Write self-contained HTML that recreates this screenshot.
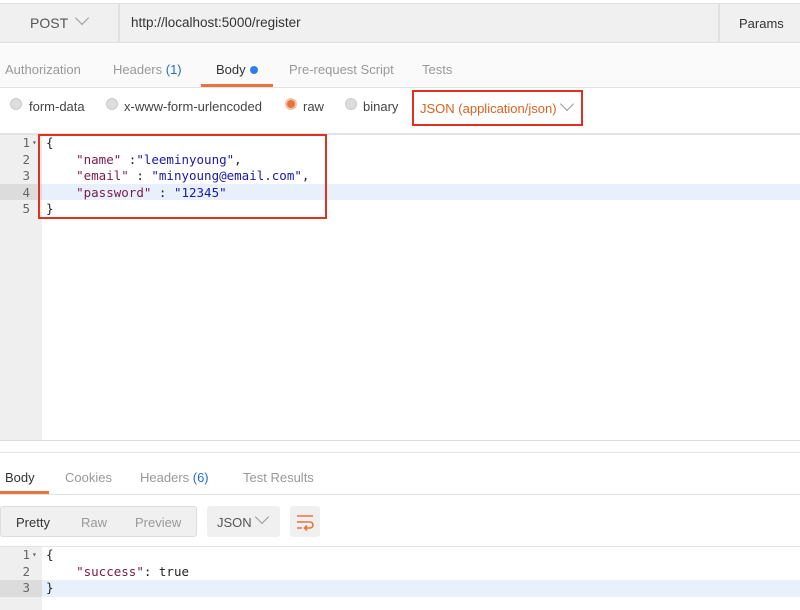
<!DOCTYPE html>
<html><head><style>
*{margin:0;padding:0;box-sizing:border-box}
body{width:800px;height:610px;overflow:hidden;background:#fff;font-family:"Liberation Sans",sans-serif;position:relative;color:#505050}
.a{position:absolute}
.mono{font-family:"DejaVu Sans Mono","Liberation Mono",monospace;font-size:12.5px}
.radio{position:absolute;width:12px;height:12px;border-radius:50%;background:#ddd;border:1px solid #ccc}
.chev{position:absolute;width:10px;height:10px;border-right:1.6px solid #999;border-bottom:1.6px solid #999;transform:rotate(45deg)}
.ln{position:absolute;left:0;width:34px;text-align:right;color:#666}
.k{color:#7a1a4a}.s{color:#1a1aa6}
</style></head><body>
<div class="a" style="left:0;top:3px;width:800px;height:40px;background:#f0f0f0;border-top:1px solid #ddd;border-bottom:1px solid #ddd"></div>
<div class="a" style="left:118px;top:3px;width:2px;height:40px;background:#e0e0e0"></div>
<div class="a" style="left:718px;top:3px;width:2px;height:40px;background:#e0e0e0"></div>
<div class="a" style="left:30px;top:15px;font-size:14px;color:#555">POST</div>
<div class="chev" style="left:77px;top:13px"></div>
<div class="a" style="left:131px;top:15px;font-size:13.5px;color:#333">http://localhost:5000/register</div>
<div class="a" style="left:739px;top:16px;font-size:13px;color:#333">Params</div>

<div class="a" style="left:0;top:44px;width:800px;height:44px;background:#fafafa;border-bottom:1px solid #e3e3e3"></div>
<div class="a" style="left:5px;top:62px;font-size:13px;color:#999">Authorization</div>
<div class="a" style="left:113px;top:62px;font-size:13px;color:#999">Headers <span style="color:#1d6fd1">(1)</span></div>
<div class="a" style="left:216px;top:62px;font-size:13px;color:#333">Body</div>
<div class="a" style="left:250px;top:66px;width:8px;height:8px;border-radius:50%;background:#2f80e6"></div>
<div class="a" style="left:201px;top:84px;width:72px;height:3px;background:#e8743b"></div>
<div class="a" style="left:289px;top:62px;font-size:13px;color:#999">Pre-request Script</div>
<div class="a" style="left:422px;top:62px;font-size:13px;color:#999">Tests</div>

<div class="radio" style="left:10px;top:98px"></div>
<div class="a" style="left:29px;top:99px;font-size:13px;color:#444">form-data</div>
<div class="radio" style="left:106px;top:98px"></div>
<div class="a" style="left:124px;top:99px;font-size:13px;color:#444">x-www-form-urlencoded</div>
<div class="radio" style="left:285px;top:98px;background:#e8743b;border:2px solid #f3c2a8"></div>
<div class="a" style="left:303px;top:99px;font-size:13px;color:#444">raw</div>
<div class="radio" style="left:345px;top:98px"></div>
<div class="a" style="left:363px;top:99px;font-size:13px;color:#444">binary</div>
<div class="a" style="left:412px;top:90px;width:171px;height:36px;border:2px solid #e03020"></div>
<div class="a" style="left:420px;top:101px;font-size:13px;color:#d8631f">JSON (application/json)</div>
<div class="chev" style="left:562px;top:99px"></div>

<div class="a" style="left:0;top:133px;width:800px;height:2px;background:#e3e3e3"></div>
<div class="a" style="left:0;top:135px;width:42px;height:305px;background:#efefef"></div>
<div class="a" style="left:0;top:184px;width:800px;height:16px;background:#e8f0fb"></div>
<div class="a" style="left:0;top:184px;width:42px;height:16px;background:#dcdcdc"></div>
<div class="a" style="left:0;top:440px;width:800px;height:1px;background:#ddd"></div>
<div class="a mono" style="left:0;top:135px;width:800px;line-height:16.5px">
<div class="ln" style="top:0;width:30px">1</div><div class="ln" style="top:16.5px;width:30px">2</div><div class="ln" style="top:33px;width:30px">3</div><div class="ln" style="top:49.5px;width:30px">4</div><div class="ln" style="top:66px;width:30px">5</div>
<div class="a" style="left:32px;top:0;font-size:8px;color:#666">▾</div>
<div class="a" style="left:46px;top:0;white-space:pre;color:#222">{
    <span class="k">"name"</span> :<span class="s">"leeminyoung"</span>,
    <span class="k">"email"</span> : <span class="s">"minyoung@email.com"</span>,
    <span class="k">"password"</span> : <span class="s">"12345"</span>
}</div>
</div>
<div class="a" style="left:38px;top:134px;width:289px;height:85px;border:2px solid #e03020"></div>

<div class="a" style="left:0;top:452px;width:800px;height:1px;background:#e3e3e3"></div>
<div class="a" style="left:0;top:494px;width:800px;height:1px;background:#e3e3e3"></div>
<div class="a" style="left:5px;top:470px;font-size:13px;color:#333">Body</div>
<div class="a" style="left:0;top:491px;width:49px;height:3px;background:#e8743b"></div>
<div class="a" style="left:65px;top:470px;font-size:13px;color:#999">Cookies</div>
<div class="a" style="left:140px;top:470px;font-size:13px;color:#999">Headers <span style="color:#1d6fd1">(6)</span></div>
<div class="a" style="left:243px;top:470px;font-size:13px;color:#999">Test Results</div>

<div class="a" style="left:0;top:506px;width:197px;height:31px;background:#f0f0f0;border:1px solid #ddd;border-radius:3px"></div>
<div class="a" style="left:16px;top:515px;font-size:13px;color:#333">Pretty</div>
<div class="a" style="left:81px;top:515px;font-size:13px;color:#999">Raw</div>
<div class="a" style="left:135px;top:515px;font-size:13px;color:#999">Preview</div>
<div class="a" style="left:207px;top:506px;width:73px;height:31px;background:#f0f0f0;border-radius:3px"></div>
<div class="a" style="left:217px;top:515px;font-size:13px;color:#555">JSON</div>
<div class="chev" style="left:257px;top:512px"></div>
<div class="a" style="left:290px;top:506px;width:30px;height:31px;background:#f0f0f0;border-radius:3px"></div>
<svg class="a" style="left:295px;top:512px" width="20" height="20" viewBox="0 0 20 20" fill="none" stroke="#e8743b" stroke-width="1.6"><path d="M2 4h16M2 10h13a3 3 0 0 1 0 6h-5M12 13.5l-2.5 2.5 2.5 2.5M2 16h5"/></svg>

<div class="a" style="left:0;top:546px;width:800px;height:1px;background:#e3e3e3"></div>
<div class="a" style="left:0;top:547px;width:42px;height:63px;background:#efefef"></div>
<div class="a" style="left:0;top:580px;width:800px;height:17px;background:#e8f0fb"></div>
<div class="a" style="left:0;top:580px;width:42px;height:17px;background:#dcdcdc"></div>
<div class="a mono" style="left:0;top:547px;width:800px;line-height:16.5px">
<div class="ln" style="top:0;width:30px">1</div><div class="ln" style="top:16.5px;width:30px">2</div><div class="ln" style="top:33px;width:30px">3</div>
<div class="a" style="left:32px;top:0;font-size:8px;color:#666">▾</div>
<div class="a" style="left:46px;top:0;white-space:pre;color:#222">{
    <span class="k">"success"</span>: true
}</div>
</div>
</body></html>
